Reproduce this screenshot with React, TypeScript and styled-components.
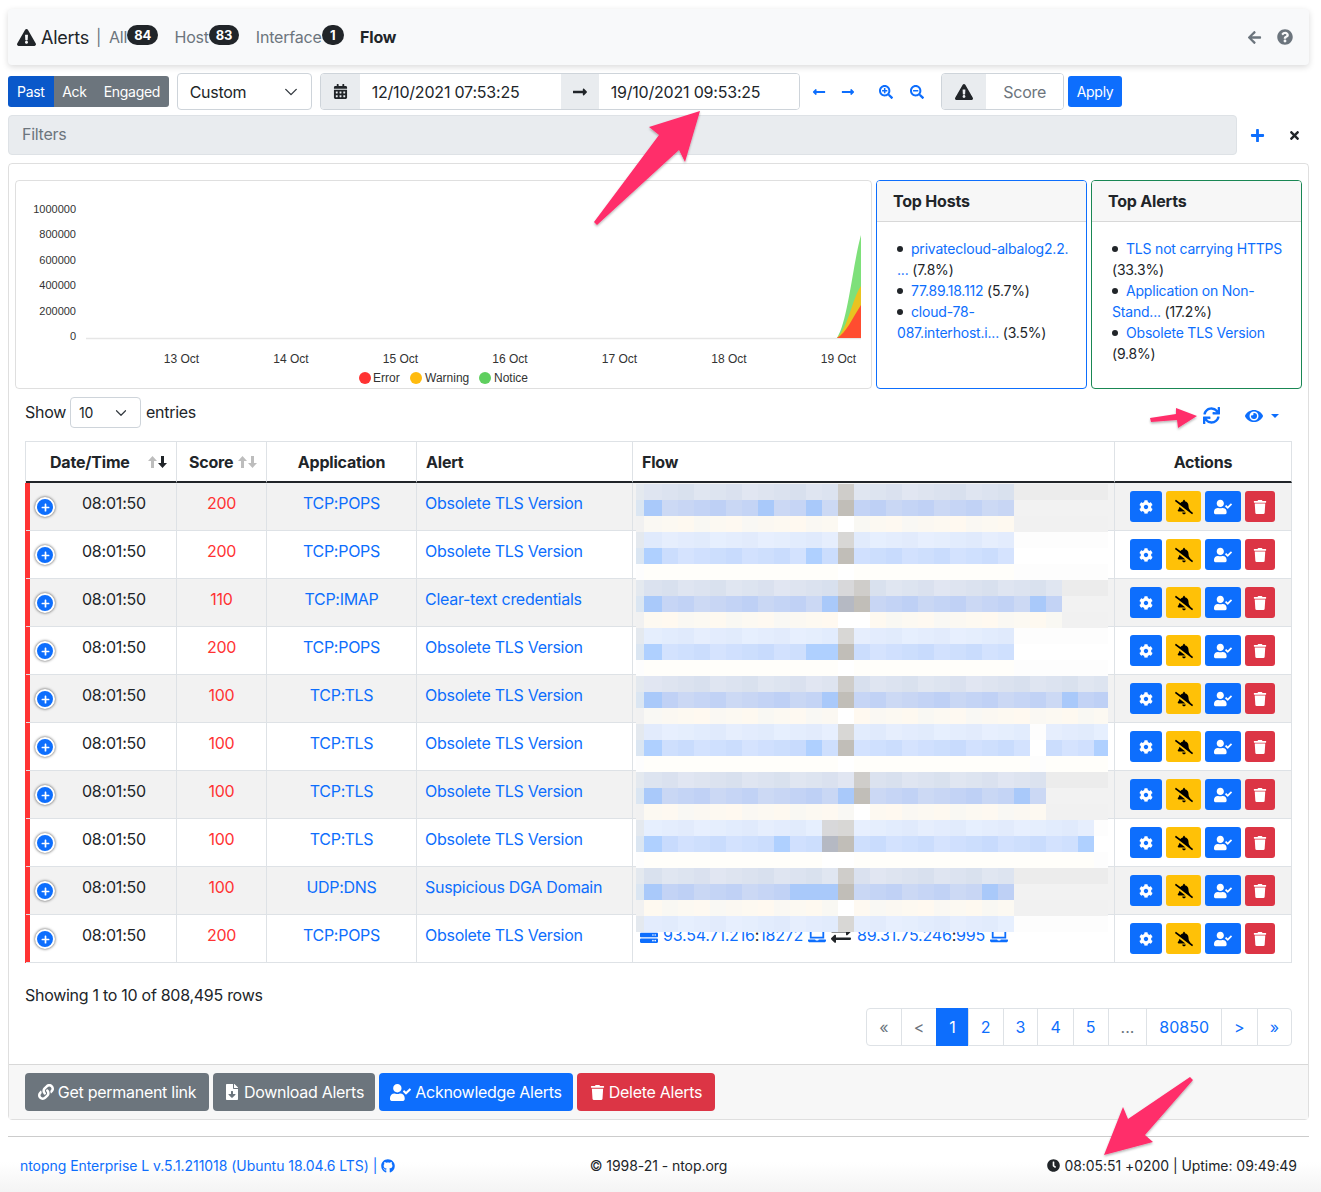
import React from "react";
import styled, { createGlobalStyle } from "styled-components";
import {
  FaArrowLeft,
  FaBellSlash,
  FaCalendarAlt,
  FaClock,
  FaCog,
  FaExchangeAlt,
  FaExclamationTriangle,
  FaEye,
  FaFileDownload,
  FaGithub,
  FaLaptop,
  FaLink,
  FaLongArrowAltLeft,
  FaLongArrowAltRight,
  FaPlus,
  FaQuestionCircle,
  FaSearchMinus,
  FaSearchPlus,
  FaServer,
  FaSync,
  FaTimes,
  FaTrash,
  FaUserCheck,
} from "react-icons/fa";

const Blue = "#0d6efd";
const Grey = "#6c757d";
const Danger = "#dc3545";
const Line = "#dee2e6";
const Red = "#ff3333";

const GlobalStyle = createGlobalStyle`
  html, body { margin: 0; padding: 0; }
  body {
    height: 1192px;
    overflow: hidden;
    background: linear-gradient(to top, #f4f4f4, #fff) bottom / 100% 30px no-repeat #fff;
    color: #212529;
    font-family: Inter, "Liberation Sans", sans-serif;
    font-size: 16px;
    letter-spacing: -0.28px;
  }
  * { box-sizing: border-box; }
`;

const Page = styled.div`
  position: relative;
  width: 1321px;
  height: 1192px;
  padding: 9px 12px 0 8px;
`;

const Navbar = styled.nav`
  display: flex;
  align-items: center;
  height: 56px;
  padding: 0 16px 0 9px;
  margin-bottom: 8px;
  background: #f8f9fa;
  border-radius: 4px;
  box-shadow: 0 2px 6px rgba(0, 0, 0, 0.15);
`;

const Brand = styled.span`
  display: flex;
  align-items: center;
  gap: 5px;
  font-size: 18px;
`;

const Divider = styled.span`
  margin: 0 8px 0 7px;
  color: ${Grey};
`;

const NavTab = styled.span<{ $active?: boolean }>`
  display: flex;
  align-items: flex-start;
  margin-right: ${(p) => (p.$active ? 0 : 16.5)}px;
  color: ${(p) => (p.$active ? "#212529" : Grey)};
  font-weight: ${(p) => (p.$active ? 700 : 400)};
  letter-spacing: -0.2px;
`;

const Badge = styled.span`
  display: inline-block;
  min-width: 22px;
  height: 20px;
  margin-top: -2px;
  padding: 0 7px;
  border-radius: 10px;
  background: #212529;
  color: #fff;
  font-size: 13px;
  font-weight: 700;
  line-height: 20px;
  text-align: center;
`;

const NavRight = styled.div`
  display: flex;
  align-items: center;
  gap: 15px;
  margin-left: auto;
  color: ${Grey};
`;

const Toolbar = styled.div`
  display: flex;
  align-items: center;
  height: 37px;
  margin-bottom: 5px;
`;

const ModeGroup = styled.div`
  display: flex;
  height: 31px;
  border-radius: 3px;
  overflow: hidden;
  margin-right: 8px;
`;

const ModeButton = styled.span<{ $active?: boolean }>`
  display: flex;
  align-items: center;
  padding: 0 ${(p) => (p.$active ? 9 : 8.5)}px;
  background: ${(p) => (p.$active ? "#0a58ca" : Grey)};
  color: #fff;
  font-size: 14px;
`;

const SelectBox = styled.div<{ $w: number; $h: number; $size: number }>`
  display: flex;
  align-items: center;
  justify-content: space-between;
  width: ${(p) => p.$w}px;
  height: ${(p) => p.$h}px;
  padding: 0 13px 0 ${(p) => (p.$size > 14 ? 12 : 8)}px;
  background: #fff;
  border: 1px solid #ced4da;
  border-radius: 4px;
  font-size: ${(p) => p.$size}px;
`;

const InputGroup = styled.div<{ $w: number; $ml?: number }>`
  display: flex;
  width: ${(p) => p.$w}px;
  height: 37px;
  margin-left: ${(p) => p.$ml ?? 0}px;
  border: 1px solid #ced4da;
  border-radius: 4px;
  overflow: hidden;
  flex: none;
`;

const Addon = styled.span<{ $w: number }>`
  display: flex;
  align-items: center;
  justify-content: center;
  flex: none;
  width: ${(p) => p.$w}px;
  background: #e9ecef;
  font-size: 16px;
`;

const DateField = styled.span<{ $w: number; $muted?: boolean }>`
  display: flex;
  align-items: center;
  justify-content: ${(p) => (p.$muted ? "center" : "flex-start")};
  flex: none;
  width: ${(p) => p.$w}px;
  padding: 0 12px;
  background: #fff;
  color: ${(p) => (p.$muted ? Grey : "#212529")};
  letter-spacing: -0.2px;
`;

const ToolIcon = styled.span<{ $ml: number }>`
  display: flex;
  margin-left: ${(p) => p.$ml}px;
  color: ${Blue};
  font-size: 14px;
`;

const ApplyButton = styled.span`
  display: flex;
  align-items: center;
  height: 31px;
  margin-left: 4px;
  padding: 0 9px;
  border-radius: 3px;
  background: ${Blue};
  color: #fff;
  font-size: 14px;
`;

const FilterRow = styled.div`
  display: flex;
  align-items: center;
  margin-bottom: 8px;
`;

const FilterInput = styled.div`
  display: flex;
  align-items: center;
  width: 1229px;
  height: 40px;
  padding: 0 13px 2px;
  background: #e9ecef;
  border: 1px solid #dee2e6;
  border-radius: 4px;
  color: ${Grey};
`;

const FilterAdd = styled.span`
  display: flex;
  margin-left: 13px;
  color: ${Blue};
  font-size: 15px;
`;

const FilterClear = styled.span`
  display: flex;
  margin-left: 23px;
  font-size: 13px;
`;

const Card = styled.section`
  border: 1px solid rgba(0, 0, 0, 0.125);
  border-radius: 4px;
`;

const CardBody = styled.div`
  padding: 16px 6px 0;
`;

const TopRow = styled.div`
  display: flex;
  gap: 4px;
  height: 209px;
`;

const ChartBox = styled.div`
  width: 857px;
  flex: none;
  border: 1px solid rgba(0, 0, 0, 0.125);
  border-radius: 4px;
`;

const Chart = styled.svg`
  display: block;
  font-family: "Liberation Sans", Arial, sans-serif;
  font-size: 12px;
  letter-spacing: 0;
  fill: #333;
`;

const AxisLabel = styled.text`
  font-size: 11px;
`;

const SideCard = styled.div<{ $color: string }>`
  width: 211px;
  flex: none;
  border: 1px solid ${(p) => p.$color};
  border-radius: 4px;
  overflow: hidden;
`;

const SideHeader = styled.div`
  height: 41px;
  padding: 0 16px;
  background: #f7f7f7;
  border-bottom: 1px solid rgba(0, 0, 0, 0.125);
  font-weight: 700;
  line-height: 40px;
  letter-spacing: -0.2px;
`;

const SideList = styled.ul`
  margin: 0;
  padding: 16px 10px 0 20px;
  list-style: none;
  font-size: 14px;
  line-height: 21px;
  letter-spacing: -0.2px;
`;

const SideItem = styled.li`
  position: relative;
  text-indent: 14px;
  white-space: nowrap;
  &::before {
    content: "";
    position: absolute;
    left: 0;
    top: 8px;
    width: 6px;
    height: 6px;
    border-radius: 50%;
    background: #212529;
  }
`;

const TextLink = styled.span`
  color: ${Blue};
`;

const ShowRow = styled.div`
  display: flex;
  align-items: center;
  height: 31px;
  margin: 8px 0 13px;
  padding-left: 10px;
`;

const ShowLabel = styled.span`
  margin: -1px 4px 0 0;
  &:last-of-type { margin: -1px 0 0 5px; }
`;

const TableTools = styled.div`
  display: flex;
  align-items: center;
  margin-left: auto;
  margin-right: 23px;
  margin-top: 6px;
  color: ${Blue};
  font-size: 17px;
`;

const EyeIcon = styled.span`
  display: flex;
  margin-left: 25px;
  font-size: 18px;
`;

const Caret = styled.span`
  margin-left: 8px;
  width: 0;
  height: 0;
  border: 4px solid transparent;
  border-top-color: ${Blue};
  border-bottom: 0;
`;

const TableWrap = styled.div`
  position: relative;
  width: 1267px;
  margin-left: 10px;
`;

const Table = styled.table`
  width: 1267px;
  table-layout: fixed;
  border-collapse: separate;
  border-spacing: 0;
  border-left: 1px solid ${Line};
`;

const Th = styled.th<{ $align?: string }>`
  height: 42px;
  padding: 0 9px;
  background: #fff;
  border-top: 1px solid ${Line};
  border-right: 1px solid ${Line};
  border-bottom: 2px solid #212529;
  font-weight: 700;
  letter-spacing: -0.2px;
  text-align: ${(p) => p.$align ?? "center"};
`;

const SortLabel = styled.div<{ $pl: number }>`
  display: flex;
  align-items: center;
  justify-content: space-between;
  padding-left: ${(p) => p.$pl}px;
`;

const SortIcons = styled.span`
  display: flex;
  gap: 1px;
`;

const Td = styled.td<{ $striped: boolean; $align?: string }>`
  position: relative;
  height: 48px;
  padding: 8px;
  vertical-align: top;
  line-height: 24px;
  background: ${(p) => (p.$striped ? "#f2f2f2" : "#fff")};
  border-right: 1px solid ${Line};
  border-bottom: 1px solid ${Line};
  text-align: ${(p) => p.$align ?? "center"};
`;

const TimeCell = styled(Td)`
  padding-left: 34px;
  letter-spacing: -0.2px;
  box-shadow: inset 4px 0 0 ${Red}, -1px 0 0 ${Red};
`;

const ExpandDot = styled.span`
  position: absolute;
  left: 9px;
  top: 14px;
  display: flex;
  align-items: center;
  justify-content: center;
  width: 20px;
  height: 20px;
  border: 2px solid #fff;
  border-radius: 50%;
  background: ${Blue};
  color: #fff;
  box-shadow: 0 0 3px #444;
  font-size: 9px;
`;

const ScoreText = styled.span`
  color: ${Red};
`;

const FlowLine = styled.div`
  display: flex;
  align-items: center;
  margin-left: -6px;
  color: ${Blue};
  white-space: nowrap;
  letter-spacing: -0.2px;
`;

const FlowSep = styled.span`
  color: #212529;
`;

const FlowIcon = styled.span<{ $dark?: boolean }>`
  display: flex;
  margin: 0 ${(p) => (p.$dark ? 6 : 5)}px 0 ${(p) => (p.$dark ? 0 : 5)}px;
  color: ${(p) => (p.$dark ? "#212529" : Blue)};
  font-size: ${(p) => (p.$dark ? 20 : 18)}px;
`;

const ActionRow = styled.div`
  display: flex;
  justify-content: center;
  gap: 4px;
  margin-left: -1px;
`;

const ActionButton = styled.span<{ $bg: string; $fg?: string; $w: number }>`
  display: flex;
  align-items: center;
  justify-content: center;
  width: ${(p) => p.$w}px;
  height: 31px;
  border-radius: 3px;
  background: ${(p) => p.$bg};
  color: ${(p) => p.$fg ?? "#fff"};
`;

const Mosaic = styled.svg`
  position: absolute;
  left: 611px;
  top: 43px;
`;

const InfoText = styled.div`
  margin: 20px 0 1px 10px;
  line-height: 24px;
`;

const Pagination = styled.div`
  display: flex;
  justify-content: flex-end;
  width: 1277px;
`;

const PageItem = styled.span<{ $active?: boolean; $muted?: boolean }>`
  display: flex;
  align-items: center;
  justify-content: center;
  height: 38px;
  padding: 0 12px;
  margin-left: -1px;
  background: ${(p) => (p.$active ? Blue : "#fff")};
  color: ${(p) => (p.$active ? "#fff" : p.$muted ? Grey : Blue)};
  border: 1px solid ${(p) => (p.$active ? Blue : Line)};
  letter-spacing: 0;
  &:first-child { border-radius: 4px 0 0 4px; }
  &:last-child { border-radius: 0 4px 4px 0; }
`;

const CardFooter = styled.div`
  display: flex;
  gap: 4px;
  height: 55px;
  margin-top: 18px;
  padding: 8px 16px;
  background: #f7f7f7;
  border-top: 1px solid rgba(0, 0, 0, 0.125);
`;

const FooterButton = styled.span<{ $bg: string; $w: number }>`
  display: flex;
  align-items: center;
  justify-content: center;
  gap: 4px;
  width: ${(p) => p.$w}px;
  height: 38px;
  border-radius: 4px;
  background: ${(p) => p.$bg};
  color: #fff;
`;

const FooterRule = styled.hr`
  height: 1px;
  margin: 16px 0 0;
  border: 0;
  background: #ccc;
`;

const Footer = styled.footer`
  display: grid;
  grid-template-columns: 1fr auto 1fr;
  align-items: center;
  height: 21px;
  margin-top: 18px;
  padding: 0 12px;
  font-size: 14px;
  letter-spacing: -0.05px;
`;

const FooterLeft = styled.span`
  display: flex;
  align-items: center;
  gap: 4px;
  color: ${Blue};
`;

const FooterRight = styled.span`
  display: flex;
  align-items: center;
  justify-content: flex-end;
  gap: 4px;
`;

const Annotations = styled.svg`
  position: absolute;
  left: 0;
  top: 0;
  pointer-events: none;
`;

type Row = { score: number; app: string; alert: string };

const rows: Row[] = [
  { score: 200, app: "TCP:POPS", alert: "Obsolete TLS Version" },
  { score: 200, app: "TCP:POPS", alert: "Obsolete TLS Version" },
  { score: 110, app: "TCP:IMAP", alert: "Clear-text credentials" },
  { score: 200, app: "TCP:POPS", alert: "Obsolete TLS Version" },
  { score: 100, app: "TCP:TLS", alert: "Obsolete TLS Version" },
  { score: 100, app: "TCP:TLS", alert: "Obsolete TLS Version" },
  { score: 100, app: "TCP:TLS", alert: "Obsolete TLS Version" },
  { score: 100, app: "TCP:TLS", alert: "Obsolete TLS Version" },
  { score: 100, app: "UDP:DNS", alert: "Suspicious DGA Domain" },
  { score: 200, app: "TCP:POPS", alert: "Obsolete TLS Version" },
];

// one entry per table row of the blurred Flow column: where the blue stops, grey and strong cells
const mosaicRows = [
  { end: 24, grey: [13], strong: [1, 8, 11], gap: [] as number[] },
  { end: 24, grey: [13], strong: [1, 11], gap: [] },
  { end: 27, grey: [13, 14], strong: [1, 12, 25], gap: [] },
  { end: 24, grey: [13], strong: [1, 11, 12], gap: [] },
  { end: 30, grey: [13], strong: [1, 12, 27], gap: [] },
  { end: 30, grey: [13], strong: [1, 11, 29], gap: [25] },
  { end: 26, grey: [14], strong: [1, 13, 24], gap: [] },
  { end: 29, grey: [12, 13], strong: [1, 9, 28], gap: [] },
  { end: 24, grey: [13], strong: [1, 10, 11, 12, 22], gap: [] },
  { end: 24, grey: [13], strong: [1], gap: [] },
];

const cellX = (i: number) => (i === 0 ? 0 : i === 1 ? 8 : 26 + (i - 2) * 16);
const cellW = (i: number) => (i === 0 ? 8 : i === 1 ? 18 : i === 29 ? 14 : 16);

function mix(a: number[], b: number[], t: number) {
  return `rgb(${a.map((v, i) => Math.round(v + (b[i] - v) * t)).join(",")})`;
}

function mosaicCell(row: number, band: number, i: number) {
  const spec = mosaicRows[row];
  const striped = row % 2 === 0;
  const jitter = ((i * 7 + row * 13 + band * 5) % 10) / 10;
  const isBlue = i >= 1 && i < spec.end && !spec.gap.includes(i);
  if (spec.grey.includes(i)) {
    if (band === 2) return "#ffffff";
    if (spec.grey.length === 2 && i === spec.grey[0]) return band === 0 ? "#d8d8da" : "#b5b9c3";
    return band === 0 ? (striped ? "#cfcdca" : "#d8d7d5") : "#c1beb8";
  }
  if (band === 2) {
    if (isBlue) return striped ? mix([255, 249, 240], [248, 248, 244], jitter) : "#fffefa";
    return striped ? "#f1f1f1" : "#fdfdfd";
  }
  if (!isBlue) {
    if (i === 0) return band === 0 ? "#e4e9ef" : "#dbe6f2";
    return band === 0 ? (striped ? "#ececec" : "#fdfdfd") : striped ? "#f2f2f2" : "#ffffff";
  }
  const strong = spec.strong.includes(i);
  if (band === 0) {
    return striped ? mix([216, 224, 238], [226, 231, 242], jitter) : mix([224, 234, 252], [232, 240, 254], jitter);
  }
  if (strong) return striped ? "#a9c9fa" : "#afd0ff";
  return striped ? mix([190, 208, 245], [206, 218, 244], jitter) : mix([200, 219, 253], [214, 228, 254], jitter);
}

const FlowMosaic = () => {
  const cells: React.ReactNode[] = [];
  for (let b = 0; b < 28; b++) {
    const row = Math.floor(b / 3);
    for (let i = 0; i < 30; i++) {
      cells.push(
        <rect key={`${b}-${i}`} x={cellX(i)} y={b * 16} width={cellW(i)} height={16} fill={mosaicCell(row, b % 3, i)} />
      );
    }
  }
  return (
    <Mosaic width={472} height={448} shapeRendering="crispEdges">
      {cells}
    </Mosaic>
  );
};

const Chevron = ({ size }: { size: number }) => (
  <svg width={size} height={size} viewBox="0 0 16 16" fill="none">
    <path d="M2 5l6 6 6-6" stroke="#343a40" strokeWidth="1.6" strokeLinecap="round" strokeLinejoin="round" />
  </svg>
);

const SortArrow = ({ down, on }: { down?: boolean; on?: boolean }) => (
  <svg width={9} height={12} viewBox="0 0 9 12" fill={on ? "#212529" : "#bdbdbd"}>
    <path d={down ? "M4.5 12L9 7H6V0H3v7H0z" : "M4.5 0L9 5H6v7H3V5H0z"} />
  </svg>
);

const AlertsChart = () => (
  <Chart width={855} height={207}>
    {[
      ["1000000", 32],
      ["800000", 57],
      ["600000", 83],
      ["400000", 108],
      ["200000", 134],
      ["0", 159],
    ].map(([label, y]) => (
      <AxisLabel key={label} x={60} y={y} textAnchor="end">
        {label}
      </AxisLabel>
    ))}
    <line x1={70} x2={845} y1={157.5} y2={157.5} stroke="#e6e6e6" strokeWidth={1.5} />
    {["13 Oct", "14 Oct", "15 Oct", "16 Oct", "17 Oct", "18 Oct", "19 Oct"].map((d, i) => (
      <text key={d} x={165.5 + i * 109.5} y={182} textAnchor="middle">
        {d}
      </text>
    ))}
    <path d="M821 157 C832 140 837 82 845 54 L845 157 Z" fill="#7ee07a" />
    <path d="M821 157 C832 147 836 118 845 105 L845 157 Z" fill="#e9c320" />
    <path d="M821 157 C830 152 836 138 845 124 L845 157 Z" fill="#ff4d30" />
    <circle cx={349} cy={197} r={6} fill="#ff3333" />
    <text x={357} y={201}>Error</text>
    <circle cx={400} cy={197} r={6} fill="#ffbb0e" />
    <text x={409} y={201}>Warning</text>
    <circle cx={469} cy={197} r={6} fill="#5fcf5f" />
    <text x={478} y={201}>Notice</text>
  </Chart>
);

export default function App() {
  return (
    <Page>
      <GlobalStyle />
      <Navbar>
        <Brand>
          <FaExclamationTriangle size={19} />
          Alerts
        </Brand>
        <Divider>|</Divider>
        <NavTab>
          All<Badge>84</Badge>
        </NavTab>
        <NavTab>
          Host<Badge>83</Badge>
        </NavTab>
        <NavTab>
          Interface<Badge>1</Badge>
        </NavTab>
        <NavTab $active>Flow</NavTab>
        <NavRight>
          <FaArrowLeft size={15} />
          <FaQuestionCircle size={16} />
        </NavRight>
      </Navbar>

      <Toolbar>
        <ModeGroup>
          <ModeButton $active>Past</ModeButton>
          <ModeButton>Ack</ModeButton>
          <ModeButton>Engaged</ModeButton>
        </ModeGroup>
        <SelectBox $w={135} $h={37} $size={16}>
          Custom <Chevron size={14} />
        </SelectBox>
        <InputGroup $w={480} $ml={8}>
          <Addon $w={39}>
            <FaCalendarAlt size={15} />
          </Addon>
          <DateField $w={201}>12/10/2021 07:53:25</DateField>
          <Addon $w={38}>
            <FaLongArrowAltRight size={16} />
          </Addon>
          <DateField $w={200}>19/10/2021 09:53:25</DateField>
        </InputGroup>
        <ToolIcon $ml={12}>
          <FaLongArrowAltLeft />
        </ToolIcon>
        <ToolIcon $ml={15}>
          <FaLongArrowAltRight />
        </ToolIcon>
        <ToolIcon $ml={24}>
          <FaSearchPlus />
        </ToolIcon>
        <ToolIcon $ml={17}>
          <FaSearchMinus />
        </ToolIcon>
        <InputGroup $w={123} $ml={17}>
          <Addon $w={44}>
            <FaExclamationTriangle size={18} />
          </Addon>
          <DateField $w={78} $muted>
            Score
          </DateField>
        </InputGroup>
        <ApplyButton>Apply</ApplyButton>
      </Toolbar>

      <FilterRow>
        <FilterInput>Filters</FilterInput>
        <FilterAdd>
          <FaPlus />
        </FilterAdd>
        <FilterClear>
          <FaTimes />
        </FilterClear>
      </FilterRow>

      <Card>
        <CardBody>
          <TopRow>
            <ChartBox>
              <AlertsChart />
            </ChartBox>
            <SideCard $color={Blue}>
              <SideHeader>Top Hosts</SideHeader>
              <SideList>
                <SideItem>
                  <TextLink>
                    privatecloud-albalog2.2.
                    <br />
                    ...
                  </TextLink>{" "}
                  (7.8%)
                </SideItem>
                <SideItem>
                  <TextLink>77.89.18.112</TextLink> (5.7%)
                </SideItem>
                <SideItem>
                  <TextLink>
                    cloud-78-
                    <br />
                    087.interhost.i...
                  </TextLink>{" "}
                  (3.5%)
                </SideItem>
              </SideList>
            </SideCard>
            <SideCard $color="#198754">
              <SideHeader>Top Alerts</SideHeader>
              <SideList>
                <SideItem>
                  <TextLink>TLS not carrying HTTPS</TextLink>
                  <br />
                  (33.3%)
                </SideItem>
                <SideItem>
                  <TextLink>
                    Application on Non-
                    <br />
                    Stand...
                  </TextLink>{" "}
                  (17.2%)
                </SideItem>
                <SideItem>
                  <TextLink>Obsolete TLS Version</TextLink>
                  <br />
                  (9.8%)
                </SideItem>
              </SideList>
            </SideCard>
          </TopRow>

          <ShowRow>
            <ShowLabel>Show</ShowLabel>
            <SelectBox $w={71} $h={31} $size={14}>
              10 <Chevron size={12} />
            </SelectBox>
            <ShowLabel>entries</ShowLabel>
            <TableTools>
              <FaSync />
              <EyeIcon>
                <FaEye />
              </EyeIcon>
              <Caret />
            </TableTools>
          </ShowRow>

          <TableWrap>
            <Table>
              <colgroup>
                <col width={151} />
                <col width={90} />
                <col width={150} />
                <col width={216} />
                <col width={482} />
                <col width={177} />
              </colgroup>
              <thead>
                <tr>
                  <Th>
                    <SortLabel $pl={15}>
                      Date/Time
                      <SortIcons>
                        <SortArrow />
                        <SortArrow down on />
                      </SortIcons>
                    </SortLabel>
                  </Th>
                  <Th>
                    <SortLabel $pl={3}>
                      Score
                      <SortIcons>
                        <SortArrow />
                        <SortArrow down />
                      </SortIcons>
                    </SortLabel>
                  </Th>
                  <Th>Application</Th>
                  <Th $align="left">Alert</Th>
                  <Th $align="left">Flow</Th>
                  <Th>Actions</Th>
                </tr>
              </thead>
              <tbody>
                {rows.map((r, i) => {
                  const striped = i % 2 === 0;
                  return (
                    <tr key={i}>
                      <TimeCell $striped={striped}>
                        <ExpandDot>
                          <FaPlus />
                        </ExpandDot>
                        08:01:50
                      </TimeCell>
                      <Td $striped={striped}>
                        <ScoreText>{r.score}</ScoreText>
                      </Td>
                      <Td $striped={striped}>
                        <TextLink>{r.app}</TextLink>
                      </Td>
                      <Td $striped={striped} $align="left">
                        <TextLink>{r.alert}</TextLink>
                      </Td>
                      <Td $striped={striped} $align="left">
                        {i === rows.length - 1 && (
                          <FlowLine>
                            <FlowIcon>
                              <FaServer />
                            </FlowIcon>
                            93.54.71.216<FlowSep>:</FlowSep>18272
                            <FlowIcon>
                              <FaLaptop />
                            </FlowIcon>
                            <FlowIcon $dark>
                              <FaExchangeAlt />
                            </FlowIcon>
                            89.31.75.246<FlowSep>:</FlowSep>995
                            <FlowIcon>
                              <FaLaptop />
                            </FlowIcon>
                          </FlowLine>
                        )}
                      </Td>
                      <Td $striped={striped}>
                        <ActionRow>
                          <ActionButton $bg={Blue} $w={32}>
                            <FaCog size={14} />
                          </ActionButton>
                          <ActionButton $bg="#ffc107" $fg="#000" $w={35}>
                            <FaBellSlash size={18} />
                          </ActionButton>
                          <ActionButton $bg={Blue} $w={36}>
                            <FaUserCheck size={18} />
                          </ActionButton>
                          <ActionButton $bg={Danger} $w={30}>
                            <FaTrash size={14} />
                          </ActionButton>
                        </ActionRow>
                      </Td>
                    </tr>
                  );
                })}
              </tbody>
            </Table>
            <FlowMosaic />
          </TableWrap>

          <InfoText>Showing 1 to 10 of 808,495 rows</InfoText>
          <Pagination>
            <PageItem $muted>«</PageItem>
            <PageItem $muted>&lt;</PageItem>
            <PageItem $active>1</PageItem>
            <PageItem>2</PageItem>
            <PageItem>3</PageItem>
            <PageItem>4</PageItem>
            <PageItem>5</PageItem>
            <PageItem $muted>...</PageItem>
            <PageItem>80850</PageItem>
            <PageItem>&gt;</PageItem>
            <PageItem>»</PageItem>
          </Pagination>
        </CardBody>
        <CardFooter>
          <FooterButton $bg={Grey} $w={184}>
            <FaLink size={16} />
            Get permanent link
          </FooterButton>
          <FooterButton $bg={Grey} $w={162}>
            <FaFileDownload size={16} />
            Download Alerts
          </FooterButton>
          <FooterButton $bg={Blue} $w={194}>
            <FaUserCheck size={21} />
            Acknowledge Alerts
          </FooterButton>
          <FooterButton $bg={Danger} $w={138}>
            <FaTrash size={15} />
            Delete Alerts
          </FooterButton>
        </CardFooter>
      </Card>

      <FooterRule />
      <Footer>
        <FooterLeft>
          ntopng Enterprise L v.5.1.211018 (Ubuntu 18.04.6 LTS) | <FaGithub size={14} />
        </FooterLeft>
        <span>© 1998-21 - ntop.org</span>
        <FooterRight>
          <FaClock size={13} /> 08:05:51 +0200 | Uptime: 09:49:49
        </FooterRight>
      </Footer>

      <Annotations width={1321} height={1192}>
        <defs>
          <filter id="arrowShadow" x="-20%" y="-20%" width="140%" height="140%">
            <feDropShadow dx="0" dy="1.5" stdDeviation="1.2" floodColor="#000" floodOpacity="0.3" />
          </filter>
        </defs>
        <g fill="#ff2d6b" filter="url(#arrowShadow)" strokeLinejoin="round">
          <path d="M700 111 L685 162 L679 150 L597 225 L594 222 L659 135 L649 127 Z" />
          <path d="M1197 416 L1178 428 L1177 420 L1151 422 L1150 418 L1176 414 L1176 408 Z" />
          <path d="M1104 1155 L1123 1107 L1128 1119 L1190 1077 L1193 1080 L1145 1135 L1153 1142 Z" />
        </g>
      </Annotations>
    </Page>
  );
}
